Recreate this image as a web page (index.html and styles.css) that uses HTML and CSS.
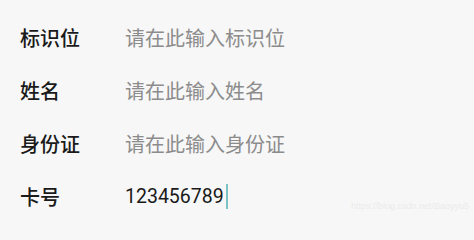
FILE: index.html
```html
<!DOCTYPE html>
<html lang="zh-CN">
<head>
<meta charset="utf-8">
<link rel="stylesheet" href="styles.css">
</head>
<body>
<div class="form">
  <div class="row"><span class="label">标识位</span><span class="field placeholder">请在此输入标识位</span></div>
  <div class="row"><span class="label">姓名</span><span class="field placeholder">请在此输入姓名</span></div>
  <div class="row"><span class="label">身份证</span><span class="field placeholder">请在此输入身份证</span></div>
  <div class="row"><span class="label">卡号</span><span class="field value">123456789<span class="cursor"></span></span></div>
  <div class="watermark">https://blog.csdn.net/Baoyyu5</div>
</div>
</body>
</html>
```
FILE: styles.css
```css
html, body {
  margin: 0;
  padding: 0;
  background: #f7f7f7;
}
.form {
  position: relative;
  width: 474px;
  height: 220px;
  padding-top: 11px;
  box-sizing: border-box;
  font-family: Roboto, "Noto Sans CJK SC", sans-serif;
}
.row {
  display: flex;
  align-items: center;
  height: 53px;
  padding-left: 20px;
}
.label {
  width: 105px;
  font-size: 20px;
  font-weight: 500;
  color: #1a1a1a;
  font-family: "Noto Sans CJK SC", sans-serif;
}
.field {
  font-size: 20px;
  display: flex;
  align-items: center;
}
.placeholder {
  color: #8c8c8c;
  font-family: "Noto Sans CJK SC", sans-serif;
}
.value {
  color: #1a1a1a;
  font-family: Roboto, sans-serif;
  font-size: 19.5px;
}
.cursor {
  display: inline-block;
  width: 2px;
  height: 25px;
  margin-left: 2px;
  background: #7cc4c4;
}
.watermark {
  position: absolute;
  right: 5px;
  bottom: 9px;
  font-family: "Liberation Sans", sans-serif;
  font-size: 9px;
  color: #ebebeb;
}
```
